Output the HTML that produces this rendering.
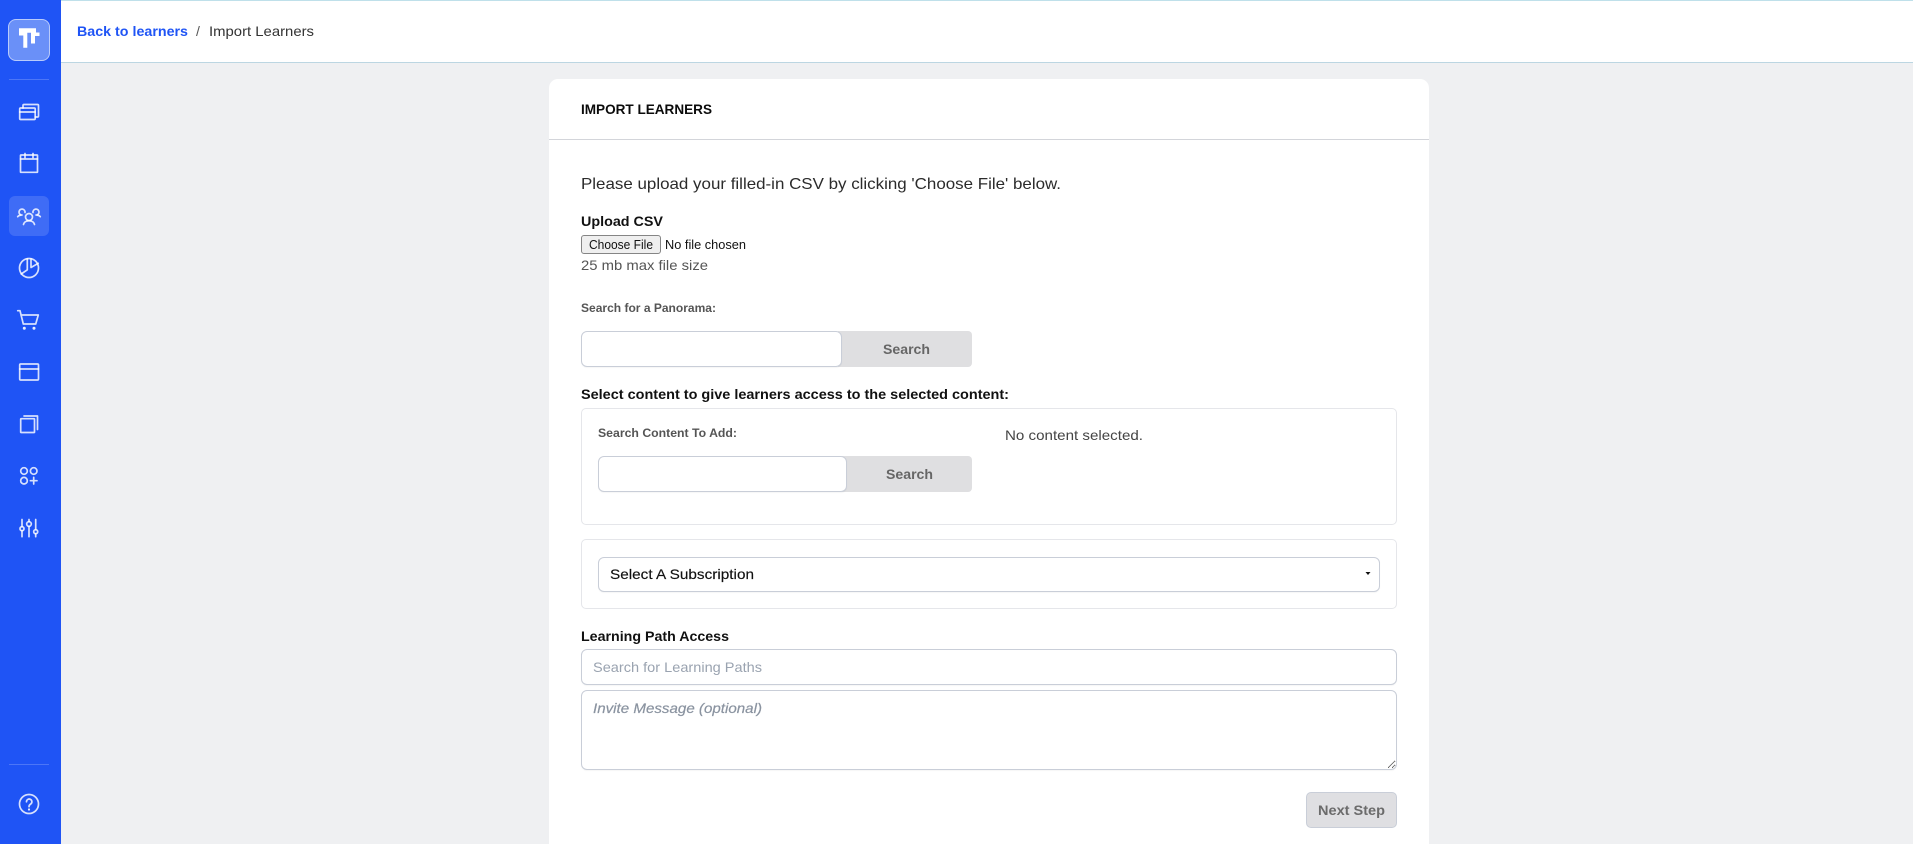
<!DOCTYPE html>
<html lang="en">
<head>
<meta charset="utf-8">
<title>Import Learners</title>
<style>
html,body{margin:0;padding:0;width:1913px;height:844px;overflow:hidden;background:#eff0f2;font-family:"Liberation Sans",sans-serif}
.a{position:absolute;box-sizing:border-box;display:block}
svg{position:absolute;left:0;top:0}
text{font-family:"Liberation Sans",sans-serif}
.inp{background:#fff;border:1px solid #c9ced8;border-radius:6px;padding:0;margin:0;outline:none;box-shadow:0 1px 1px rgba(0,0,0,.04)}
.btn{background:#dfdfe1;border:0;padding:0;margin:0;border-radius:0 4px 4px 0}
.box{border:1px solid #e5e6ea;border-radius:5px;background:#fff}
</style>
</head>
<body>
<div class="a" style="left:0;top:0;width:61px;height:844px;background:#1f54f5"></div>
<div class="a" style="left:61px;top:0;width:1852px;height:63px;background:#fff;border-top:1px solid #bfe0ea;border-bottom:1px solid #bcd6e2"></div>
<div class="a" style="left:8px;top:19px;width:42px;height:42px;background:#6a90f8;border:1px solid #b9cbfb;border-radius:8px"></div>
<div class="a" style="left:9px;top:79px;width:40px;height:1px;background:#4c76f7"></div>
<div class="a" style="left:9px;top:196px;width:40px;height:40px;background:#3f6cf6;border-radius:6px"></div>
<div class="a" style="left:9px;top:764px;width:40px;height:1px;background:#4c76f7"></div>

<div class="a" style="left:549px;top:79px;width:880px;height:765px;background:#fff;border-radius:9px 9px 0 0"></div>
<div class="a" style="left:549px;top:139px;width:880px;height:1px;background:#d3d5da"></div>

<button class="a" style="left:581px;top:235px;width:80px;height:19px;background:#efefef;border:1px solid #858585;border-radius:3px;padding:0"></button>

<input class="a btn" style="left:838px;top:331px;width:134px;height:36px" type="button">
<input class="a inp" style="left:581px;top:331px;width:261px;height:36px" type="text">

<div class="a box" style="left:581px;top:408px;width:816px;height:117px"></div>
<input class="a btn" style="left:842px;top:456px;width:130px;height:36px" type="button">
<input class="a inp" style="left:598px;top:456px;width:249px;height:36px" type="text">

<div class="a box" style="left:581px;top:539px;width:816px;height:70px"></div>
<div class="a inp" style="left:598px;top:557px;width:782px;height:35px"></div>

<input class="a inp" style="left:581px;top:649px;width:816px;height:36px" type="text">
<textarea class="a inp" style="left:581px;top:690px;width:816px;height:80px;resize:both"></textarea>

<button class="a" style="left:1306px;top:792px;width:91px;height:36px;background:#dfdfe2;border:1px solid #c9ced8;border-radius:5px;padding:0"></button>

<svg width="1913" height="844" viewBox="0 0 1913 844" style="pointer-events:none">
  <!-- logo -->
  <path fill="#fff" d="M19 28.300H36V32.500H39.500V36H35V43.500H31V32.700H27.300V47.700H23.300V35.500H19Z"/>
  <g fill="none" stroke="#fff" stroke-opacity=".82" stroke-width="1.700" stroke-linecap="round" stroke-linejoin="round">
    <!-- stacked windows -->
    <rect x="19.700" y="108" width="15.500" height="11.500" rx="1"/>
    <path d="M19.700 112H35.200M23 108V105.500A1 1 0 0 1 24 104.500H37.500A1 1 0 0 1 38.500 105.500V116A1 1 0 0 1 37.500 117H35.200"/>
    <!-- calendar -->
    <rect x="20.500" y="155" width="17" height="17.300" rx=".6"/>
    <path d="M20.500 159H37.500M25 153.500V158M33 153.500V158"/>
    <!-- people -->
    <circle cx="29" cy="217" r="3.500"/>
    <path d="M23.500 224.500C24.500 219.500 33.500 219.500 34.500 224.500"/>
    <path d="M20.500 214.700A3 3 0 1 1 25 212.500M37.500 214.700A3 3 0 1 0 33 212.500"/>
    <path d="M17.700 216.700C18.500 215.700 20 215 22 215M40.300 216.700C39.500 215.700 38 215 36 215"/>
    <!-- pie -->
    <circle cx="29" cy="268" r="9.500"/>
    <path d="M27.300 258.700V269.800L21.200 274M31 258.700V267.500L38.200 263.300"/>
    <!-- cart -->
    <path d="M17.700 310.700H20L23.300 324H35.700L38.300 315H20.900"/>
    <!-- window -->
    <rect x="19.700" y="364" width="18.800" height="16" rx="1"/>
    <path d="M19.700 369H38.500"/>
    <!-- copy -->
    <rect x="20.700" y="418.700" width="13.800" height="13.800" rx=".5"/>
    <path d="M24 416H37.500V429.500"/>
    <!-- apps -->
    <circle cx="24" cy="471" r="3.300"/>
    <circle cx="33.700" cy="471" r="3.300"/>
    <circle cx="24" cy="480.700" r="3.300"/>
    <path d="M33.700 477.400V484M30.400 480.700H37"/>
    <!-- sliders -->
    <path d="M22 519.500V526.700M22 530.700V536.700M29 519.500V521.700M29 526.300V536.700M35.700 519.500V529.700M35.700 533.700V536.700"/>
    <circle cx="22" cy="528.700" r="2"/>
    <circle cx="29" cy="524" r="2.300"/>
    <circle cx="35.700" cy="531.700" r="2"/>
    <!-- help -->
    <circle cx="29" cy="804" r="9.500"/>
    <path d="M26.500 801.800A2.700 2.700 0 1 1 30.700 804C29.600 804.700 29 805.300 29 806.700"/>
  </g>
  <g fill="#fff" fill-opacity=".9">
    <circle cx="24.300" cy="328.300" r="1.500"/>
    <circle cx="34" cy="328.300" r="1.500"/>
    <circle cx="29" cy="809.500" r="1.100"/>
  </g>

  <!-- breadcrumb -->
  <text x="77" y="36" font-size="14" font-weight="700" fill="#1f54f5" textLength="111" lengthAdjust="spacingAndGlyphs">Back to learners</text>
  <text x="196" y="36" font-size="14" fill="#555">/</text>
  <text x="209" y="36" font-size="14" fill="#333" textLength="105" lengthAdjust="spacingAndGlyphs">Import Learners</text>

  <!-- card -->
  <text x="581" y="114" font-size="14" font-weight="700" fill="#0b0b0b" textLength="131" lengthAdjust="spacingAndGlyphs">IMPORT LEARNERS</text>
  <text x="581" y="189" font-size="16" fill="#2b2b2b" textLength="480" lengthAdjust="spacingAndGlyphs">Please upload your filled-in CSV by clicking 'Choose File' below.</text>
  <text x="581" y="226" font-size="14" font-weight="700" fill="#111" textLength="82" lengthAdjust="spacingAndGlyphs">Upload CSV</text>
  <text x="589" y="249" font-size="12.500" fill="#111" textLength="64" lengthAdjust="spacingAndGlyphs">Choose File</text>
  <text x="665" y="249" font-size="12.500" fill="#111" textLength="81" lengthAdjust="spacingAndGlyphs">No file chosen</text>
  <text x="581" y="270" font-size="14" fill="#555" textLength="127" lengthAdjust="spacingAndGlyphs">25 mb max file size</text>
  <text x="581" y="312" font-size="12" font-weight="700" fill="#555" textLength="135" lengthAdjust="spacingAndGlyphs">Search for a Panorama:</text>
  <text x="883" y="354" font-size="14" font-weight="700" fill="#666" textLength="47" lengthAdjust="spacingAndGlyphs">Search</text>
  <text x="581" y="399" font-size="14" font-weight="700" fill="#111" textLength="428" lengthAdjust="spacingAndGlyphs">Select content to give learners access to the selected content:</text>
  <text x="598" y="437" font-size="12" font-weight="700" fill="#555" textLength="139" lengthAdjust="spacingAndGlyphs">Search Content To Add:</text>
  <text x="1005" y="440" font-size="14" fill="#444" textLength="138" lengthAdjust="spacingAndGlyphs">No content selected.</text>
  <text x="886" y="479" font-size="14" font-weight="700" fill="#666" textLength="47" lengthAdjust="spacingAndGlyphs">Search</text>
  <text x="610" y="579" font-size="14" fill="#111" stroke="#111" stroke-width=".15" textLength="144" lengthAdjust="spacingAndGlyphs">Select A Subscription</text>
  <path d="M1365.500 572H1370.500L1368 575Z" fill="#111"/>
  <text x="581" y="641" font-size="14" font-weight="700" fill="#111" textLength="148" lengthAdjust="spacingAndGlyphs">Learning Path Access</text>
  <text x="593" y="672" font-size="14" fill="#9aa3b0" textLength="169" lengthAdjust="spacingAndGlyphs">Search for Learning Paths</text>
  <text x="593" y="713" font-size="14" font-style="italic" fill="#8a93a0" stroke="#8a93a0" stroke-width=".2" textLength="169" lengthAdjust="spacingAndGlyphs">Invite Message (optional)</text>
  <text x="1318" y="815" font-size="14" font-weight="700" fill="#6b6b6b" textLength="67" lengthAdjust="spacingAndGlyphs">Next Step</text>
</svg>
</body>
</html>
